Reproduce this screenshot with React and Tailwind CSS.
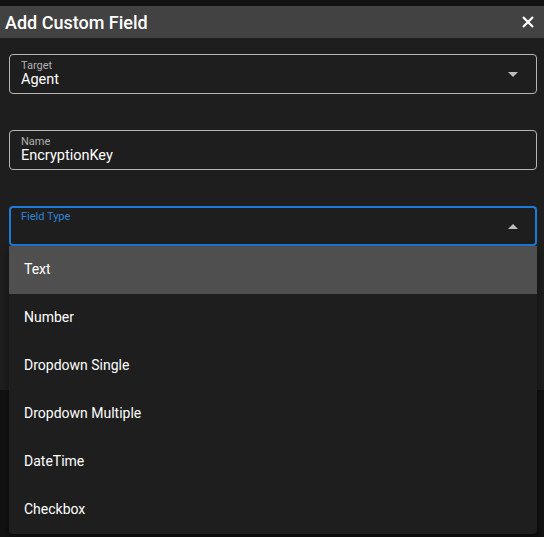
import { useState } from 'react'

const FIELD_TYPES = ['Text', 'Number', 'Dropdown Single', 'Dropdown Multiple', 'DateTime', 'Checkbox']

// ── Small caret for the select boxes ──────────────────────────────────────────
function Caret({ up }) {
  return (
    <svg width="10" height="5" viewBox="0 0 10 5" className="text-[#bdbdbd]">
      {up
        ? <path d="M0 5 L5 0 L10 5 Z" fill="currentColor" />
        : <path d="M0 0 L5 5 L10 0 Z" fill="currentColor" />}
    </svg>
  )
}

function OutlinedField({ label, value, caret, focused }) {
  return (
    <div
      className={
        'h-[40px] rounded-[4px] flex items-center ' +
        (focused ? 'border-2 border-[#1e7ad8] pl-[10px] pr-[17px]' : 'border border-[#b5b5b5] pl-[11px] pr-[18px]')
      }
    >
      <div className="flex-1 flex flex-col leading-none">
        <span className={'text-[11px] ' + (focused ? 'text-[#2f84d8] -mt-[15px]' : 'text-[#b0b0b0]')}>{label}</span>
        {value && <span className="text-[14.5px] text-white mt-[2px]">{value}</span>}
      </div>
      {caret && <Caret up={focused} />}
    </div>
  )
}

export default function App() {
  const [active] = useState(0)

  return (
    <div
      className="relative h-[537px] w-[544px] overflow-hidden bg-[#121212] pt-[6px]"
      style={{ fontFamily: 'Roboto, "Liberation Sans", sans-serif' }}
    >
      {/* ── Dialog ───────────────────────────────────────────────────────── */}
      <div className="flex flex-col">
        <header className="h-[32px] bg-[#424242] flex items-center pl-[5px] pr-[10px]">
          <span className="text-[18px] font-medium text-white">Add Custom Field</span>
          <svg className="ml-auto" width="12" height="12" viewBox="0 0 12 12">
            <path d="M1 1 L11 11 M11 1 L1 11" stroke="white" strokeWidth="2.2" />
          </svg>
        </header>
        <div className="h-[352px] bg-[#1e1e1e] pl-[9px] pr-[7px] pt-[16px] flex flex-col gap-[36px]">
          <OutlinedField label="Target" value="Agent" caret />
          <OutlinedField label="Name" value="EncryptionKey" />
          <OutlinedField label="Field Type" caret focused />
        </div>
      </div>

      {/* ── Open select menu ─────────────────────────────────────────────── */}
      <ul className="absolute left-[9px] top-[246px] w-[528px] bg-[#1e1e1e] rounded-b-[4px] shadow-[0_4px_8px_rgba(0,0,0,0.5)]">
        {FIELD_TYPES.map((t, i) => (
          <li
            key={t}
            className={'h-[48px] flex items-center pl-[15px] pb-[2px] text-[14px] text-white ' + (i === active ? 'bg-[#4f4f4f]' : '')}
          >
            {t}
          </li>
        ))}
      </ul>
    </div>
  )
}
